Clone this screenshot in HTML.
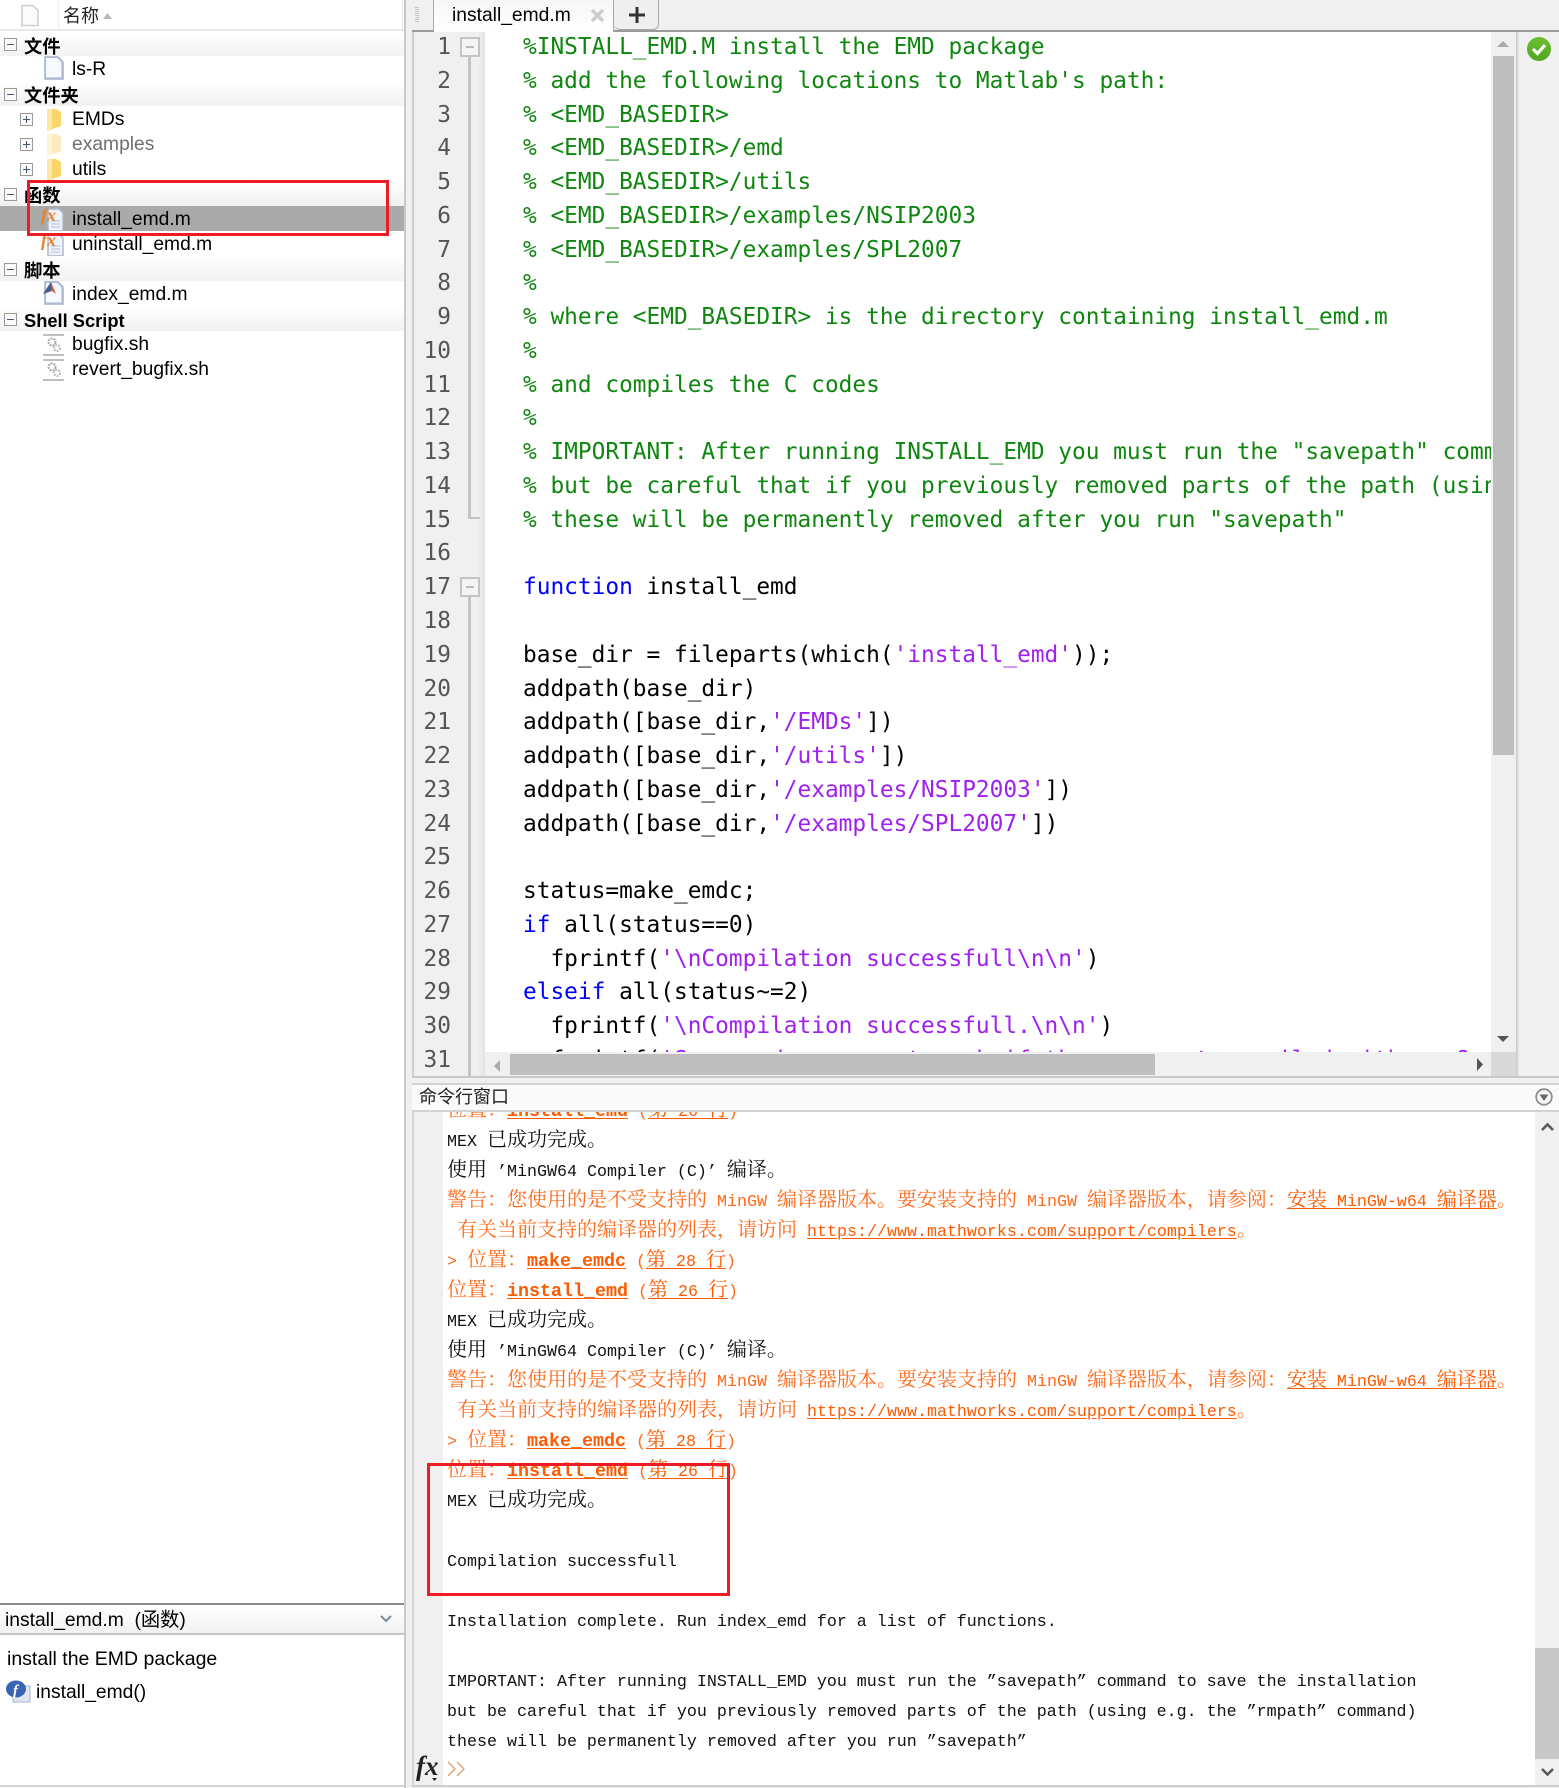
<!DOCTYPE html>
<html lang="zh"><head><meta charset="utf-8"><title>install_emd.m</title>
<style>
html,body{margin:0;padding:0}
body{width:1559px;height:1788px;position:relative;overflow:hidden;background:#f0f0f0;font-family:"Liberation Sans","Noto Sans CJK SC",sans-serif;color:#000}
div,svg{position:absolute;box-sizing:border-box}
.row{left:0;width:404px;height:25px;line-height:25px;font-size:19.25px;white-space:pre;background:#fff}
.row .t{left:72px;top:1px;position:absolute}
.sec{background:linear-gradient(#fff,#f1f1f1);font-weight:bold;font-size:18.3px}
.sec .t{left:24px;top:2px}
.sel{background:#aaa}
.box{left:4px;width:13px;height:13px;top:5px;border:1px solid #9a9a9a;background:#fafafa}
.box:after{content:"";position:absolute;left:2px;right:2px;top:5px;height:1px;background:#44567a}
.pl{left:20px;width:13px;height:13px;top:7px;border:1px solid #9a9a9a;background:#fafafa}
.pl:after{content:"";position:absolute;left:2px;right:2px;top:5px;height:1px;background:#44567a}
.pl:before{content:"";position:absolute;top:2px;bottom:2px;left:5px;width:1px;background:#44567a}
#code div,#nums div{position:static;height:33.77px;line-height:33.77px;white-space:pre}
#code,#nums{font-family:"DejaVu Sans Mono",monospace;font-size:22.8px}
#nums{left:412px;top:31px;width:39px;text-align:right;color:#555}
.g{color:#0f860f}.k{color:#0000ff}.s{color:#a020f0}
#cmd{left:447px;top:0;font-family:"Liberation Mono",monospace;font-size:16.67px;color:#111}
#cmd div{position:static;height:30px;line-height:30px;white-space:pre}
#cmd i{font-style:normal;font-family:"Noto Serif CJK SC","Noto Sans CJK SC",serif;font-size:20px;line-height:20px;font-weight:400}
.w{color:#ff6a1a}
.w u,.w b{color:#ff5a00;text-decoration:underline;text-underline-offset:2px}
.w b{font-size:18.33px;line-height:20px}
.red{border:3px solid #ed1c24;background:transparent;z-index:20}
</style></head>
<body>

<svg width="0" height="0" style="left:0;top:0">
<defs>
<symbol id="folder" viewBox="0 0 16 24"><path d="M1 2h9l5 3v14L1 24z" fill="#fbd46a"/><path d="M1 2h5v21l-5 1z" fill="#fde6a6"/></symbol>
<symbol id="doc" viewBox="0 0 22 24"><path d="M2 1h13l5 5v17H2z" fill="#c9d4e8" stroke="#a4b1ca" stroke-width="1.5"/><path d="M3 2h11l4 4v15H3z" fill="#f6f9fe"/></symbol>
<symbol id="fx" viewBox="0 0 24 26"><path d="M7 3h11l4 4v18H7z" fill="#eef2fa" stroke="#a9b6cd" stroke-width="1.400"/><path d="M10 15h9M10 18h9M10 21h9" stroke="#b3c0d6" stroke-width="1"/><text x="0" y="15" font-family="Liberation Serif,serif" font-style="italic" font-weight="bold" font-size="18" fill="#e8812a">fx</text></symbol>
<symbol id="sh" viewBox="0 0 22 24"><path d="M0 2h21" stroke="#aaa" stroke-width="1.500"/><path d="M0 22h21" stroke="#aaa" stroke-width="1.500"/><circle cx="9" cy="9" r="3.500" fill="none" stroke="#aaa" stroke-width="2" stroke-dasharray="2 1"/><circle cx="14" cy="15" r="3" fill="none" stroke="#bbb" stroke-width="2" stroke-dasharray="2 1"/></symbol>
</defs></svg>

<!-- LEFT PANEL -->
<div style="left:0;top:0;width:404px;height:1788px;background:#fff"></div>
<div style="left:0;top:0;width:404px;height:31px;background:#fff;border-bottom:2px solid #e8e8e8"></div>
<div style="left:58px;top:0;width:1px;height:30px;background:#eee"></div>
<div style="left:402px;top:0;width:1px;height:30px;background:#e6e6e6"></div>
<svg style="left:20px;top:4px" width="20" height="23"><path d="M2 1.500h11l5 5v15H2z" fill="#fbfbfb" stroke="#cfcfcf" stroke-width="1.600"/></svg>
<div style="left:63px;top:3px;font-size:18px;line-height:26px;color:#222">名称</div>
<svg style="left:103px;top:13px" width="10" height="6"><path d="M0 6L4.500 0 9 6z" fill="#b5bcae"/></svg>

<div class="row sec" style="top:33px"><div class="box"></div><span class="t" style="top:1px">文件</span></div>
<div class="row" style="top:56px"><span class="t">ls-R</span><svg style="left:43px;top:0" width="22" height="24"><use href="#doc"/></svg></div>
<div class="row sec" style="top:81px"><div class="box" style="top:7px"></div><span class="t">文件夹</span></div>
<div class="row" style="top:106px"><div class="pl"></div><svg style="left:46px;top:1px" width="16" height="24"><use href="#folder"/></svg><span class="t">EMDs</span></div>
<div class="row" style="top:131px"><div class="pl"></div><svg style="left:46px;top:1px;opacity:.45" width="16" height="24"><use href="#folder"/></svg><span class="t" style="color:#6f6f6f">examples</span></div>
<div class="row" style="top:156px"><div class="pl"></div><svg style="left:46px;top:1px" width="16" height="24"><use href="#folder"/></svg><span class="t">utils</span></div>
<div class="row sec" style="top:181px"><div class="box" style="top:7px"></div><span class="t">函数</span></div>
<div class="row sel" style="top:206px"><svg style="left:41px;top:0" width="24" height="26"><use href="#fx"/></svg><span class="t">install_emd.m</span></div>
<div class="row" style="top:231px"><svg style="left:41px;top:0" width="24" height="26"><use href="#fx"/></svg><span class="t">uninstall_emd.m</span></div>
<div class="row sec" style="top:256px"><div class="box" style="top:7px"></div><span class="t">脚本</span></div>
<div class="row" style="top:281px"><svg style="left:43px;top:0" width="22" height="24"><use href="#doc"/></svg><svg style="left:43px;top:0" width="16" height="16"><path d="M0 13L8 1l5 12-4-3z" fill="#d9542b"/><path d="M0 13l8-3V1z" fill="#3d5f99"/></svg><span class="t">index_emd.m</span></div>
<div class="row sec" style="top:306px"><div class="box" style="top:7px"></div><span class="t">Shell Script</span></div>
<div class="row" style="top:331px"><svg style="left:43px;top:2px" width="22" height="24"><use href="#sh"/></svg><span class="t">bugfix.sh</span></div>
<div class="row" style="top:356px"><svg style="left:43px;top:2px" width="22" height="24"><use href="#sh"/></svg><span class="t">revert_bugfix.sh</span></div>

<div class="red" style="left:27px;top:180px;width:362px;height:56px"></div>

<!-- details pane -->
<div style="left:0;top:1603px;width:404px;height:2px;background:#8a8a8a"></div>
<div style="left:0;top:1605px;width:404px;height:30px;background:linear-gradient(#fff,#f2f2f2);border-bottom:2px solid #c6c6c6"></div>
<div style="left:5px;top:1607px;font-size:19.25px;line-height:28px;white-space:pre">install_emd.m  (函数)</div>
<svg style="left:380px;top:1615px" width="13" height="9"><path d="M1 1l5 5 5-5" fill="none" stroke="#7d8a94" stroke-width="2"/></svg>
<div style="left:7px;top:1645px;font-size:19.5px;line-height:28px;white-space:pre">install the EMD package</div>
<svg style="left:6px;top:1680px" width="25" height="23"><rect x="7" y="6" width="17" height="16" fill="#dfe5f2" stroke="#aab4c8"/><ellipse cx="10" cy="9" rx="10" ry="8.500" fill="#3b63b4"/><text x="7" y="15" font-family="Liberation Serif,serif" font-style="italic" font-weight="bold" font-size="15" fill="#fff">f</text></svg>
<div style="left:36px;top:1679px;font-size:19.25px;line-height:28px;white-space:pre">install_emd()</div>
<div style="left:0;top:1785px;width:404px;height:2px;background:#d4d4d4"></div>

<!-- panel separator -->
<div style="left:404px;top:0;width:2px;height:1788px;background:#c9c9c9"></div>
<div style="left:406px;top:0;width:6px;height:1788px;background:#f0f0f0"></div>

<!-- EDITOR -->
<div style="left:412px;top:0;width:1147px;height:30px;background:#f0f0f0"></div>
<div style="left:412px;top:30px;width:1147px;height:2px;background:#9b9b9b"></div>
<svg style="left:415px;top:7px" width="4" height="15"><path d="M0 .5h4M0 2.500h4M0 4.500h4M0 6.500h4M0 8.500h4M0 10.500h4M0 12.500h4M0 14.500h4" stroke="#c4c4c4"/></svg>
<div style="left:433px;top:0;width:181px;height:32px;background:linear-gradient(#f6f6f8,#fff);border:1px solid #a8a8a8;border-top:0;border-bottom:0"></div>
<div style="left:452px;top:1px;font-size:19.25px;line-height:29px;white-space:pre">install_emd.m</div>
<svg style="left:590px;top:8px" width="15" height="15"><path d="M2 2l11 11M13 2L2 13" stroke="#cdcdcd" stroke-width="3.500"/></svg>
<div style="left:614px;top:0;width:45px;height:30px;background:#efefef;border:1px solid #a8a8a8;border-top:0;border-left:0;border-radius:0 0 6px 6px"></div>
<svg style="left:629px;top:7px" width="16" height="16"><path d="M8 0v16M0 8h16" stroke="#333" stroke-width="3"/></svg>

<div style="left:412px;top:32px;width:1104px;height:1044px;background:#fff;overflow:hidden">
 <div style="left:0;top:0;width:73px;height:1044px;background:linear-gradient(90deg,#f0f0f0 0,#f0f0f0 90%,#e4e4e4 100%)"></div>
</div>
<div style="left:412px;top:32px;width:2px;height:1044px;background:#cfcfcf"></div>

<div style="left:0;top:0;width:1559px;height:1076px;overflow:hidden;clip-path:inset(32px 0 0 0)">
<div id="nums"><div>1</div><div>2</div><div>3</div><div>4</div><div>5</div><div>6</div><div>7</div><div>8</div><div>9</div><div>10</div><div>11</div><div>12</div><div>13</div><div>14</div><div>15</div><div>16</div><div>17</div><div>18</div><div>19</div><div>20</div><div>21</div><div>22</div><div>23</div><div>24</div><div>25</div><div>26</div><div>27</div><div>28</div><div>29</div><div>30</div><div>31</div></div>
</div>

<!-- fold -->
<div style="left:468px;top:57px;width:3px;height:461px;background:#c4c4c4"></div>
<div style="left:468px;top:517px;width:12px;height:2px;background:#c4c4c4"></div>
<div style="left:468px;top:597px;width:3px;height:479px;background:#c4c4c4"></div>
<div style="left:460px;top:37px;width:20px;height:20px;background:#f4f4f4;border:2px solid #c4c4c4"></div>
<div style="left:466px;top:46px;width:8px;height:2px;background:#bcbcbc"></div>
<div style="left:460px;top:577px;width:20px;height:20px;background:#f4f4f4;border:2px solid #c4c4c4"></div>
<div style="left:466px;top:586px;width:8px;height:2px;background:#bcbcbc"></div>

<div style="left:485px;top:32px;width:1006px;height:1021px;overflow:hidden;background:#fff">
<div id="code" style="left:38px;top:-1px">
<div class="g">%INSTALL_EMD.M install the EMD package</div>
<div class="g">% add the following locations to Matlab's path:</div>
<div class="g">% &lt;EMD_BASEDIR&gt;</div>
<div class="g">% &lt;EMD_BASEDIR&gt;/emd</div>
<div class="g">% &lt;EMD_BASEDIR&gt;/utils</div>
<div class="g">% &lt;EMD_BASEDIR&gt;/examples/NSIP2003</div>
<div class="g">% &lt;EMD_BASEDIR&gt;/examples/SPL2007</div>
<div class="g">%</div>
<div class="g">% where &lt;EMD_BASEDIR&gt; is the directory containing install_emd.m</div>
<div class="g">%</div>
<div class="g">% and compiles the C codes</div>
<div class="g">%</div>
<div class="g">% IMPORTANT: After running INSTALL_EMD you must run the "savepath" command to save the installation</div>
<div class="g">% but be careful that if you previously removed parts of the path (using e.g. the "rmpath" command)</div>
<div class="g">% these will be permanently removed after you run "savepath"</div>
<div>&nbsp;</div>
<div><span class="k">function</span> install_emd</div>
<div>&nbsp;</div>
<div>base_dir = fileparts(which(<span class="s">'install_emd'</span>));</div>
<div>addpath(base_dir)</div>
<div>addpath([base_dir,<span class="s">'/EMDs'</span>])</div>
<div>addpath([base_dir,<span class="s">'/utils'</span>])</div>
<div>addpath([base_dir,<span class="s">'/examples/NSIP2003'</span>])</div>
<div>addpath([base_dir,<span class="s">'/examples/SPL2007'</span>])</div>
<div>&nbsp;</div>
<div>status=make_emdc;</div>
<div><span class="k">if</span> all(status==0)</div>
<div>  fprintf(<span class="s">'\nCompilation successfull\n\n'</span>)</div>
<div><span class="k">elseif</span> all(status~=2)</div>
<div>  fprintf(<span class="s">'\nCompilation successfull.\n\n'</span>)</div>
<div>  fprintf(<span class="s">'Some codes may not work if they are not compiled with gcc?</span></div>
</div>
</div>

<!-- editor v scrollbar -->
<div style="left:1491px;top:32px;width:25px;height:1021px;background:#f0f0f0"></div>
<div style="left:1493px;top:56px;width:21px;height:699px;background:#bebebe"></div>
<svg style="left:1497px;top:40px" width="13" height="8"><path d="M0 7L6 1l6 6z" fill="#aaa"/></svg>
<svg style="left:1497px;top:1035px" width="13" height="8"><path d="M0 1l6 6 6-6z" fill="#555"/></svg>
<div style="left:1516px;top:32px;width:3px;height:1044px;background:linear-gradient(90deg,#c6c6c6,#eaeaea)"></div>
<svg style="left:1527px;top:37px" width="24" height="24"><defs><linearGradient id="gc" x1="0" y1="0" x2="0" y2="1"><stop offset="0" stop-color="#6cc030"/><stop offset="1" stop-color="#4fa821"/></linearGradient></defs><circle cx="12" cy="12" r="12" fill="url(#gc)"/><path d="M6 12l4.500 4.500L18 8" fill="none" stroke="#fff" stroke-width="3.200"/></svg>

<!-- editor h scrollbar -->
<div style="left:485px;top:1052px;width:1006px;height:24px;background:#f0f0f0"></div>
<div style="left:510px;top:1054px;width:645px;height:21px;background:#bebebe"></div>
<svg style="left:493px;top:1060px" width="8" height="12"><path d="M7 0L1 6l6 6z" fill="#aaa"/></svg>
<svg style="left:1476px;top:1058px" width="8" height="13"><path d="M1 0l6 6.500-6 6.500z" fill="#555"/></svg>
<div style="left:1491px;top:1052px;width:25px;height:24px;background:#d9d9d9"></div>
<div style="left:412px;top:1076px;width:1147px;height:2px;background:#c9c9c9"></div>

<!-- COMMAND WINDOW -->
<div style="left:412px;top:1083px;width:1147px;height:2px;background:#d2d2d2"></div>
<div style="left:412px;top:1085px;width:1147px;height:25px;background:#fafafa"></div>
<div style="left:412px;top:1110px;width:1147px;height:2px;background:#d2d2d2"></div>
<div style="left:419px;top:1084px;font-size:18px;line-height:27px;color:#222">命令行窗口</div>
<svg style="left:1535px;top:1088px" width="18" height="18"><circle cx="9" cy="9" r="7.800" fill="#f8f8f8" stroke="#8e8e8e" stroke-width="1.800"/><path d="M4.500 6.500h9L9 13z" fill="#666"/></svg>

<div style="left:412px;top:1112px;width:31px;height:673px;background:#f0f0f0"></div>
<div style="left:412px;top:1112px;width:2px;height:673px;background:#d6d6d6"></div>
<div style="left:443px;top:1112px;width:1092px;height:673px;background:#fff"></div>
<div style="left:1535px;top:1112px;width:24px;height:673px;background:#f0f0f0"></div>
<div style="left:1535px;top:1648px;width:24px;height:111px;background:#c8c8c8"></div>
<svg style="left:1541px;top:1122px" width="13" height="10"><path d="M1 8l5.500-5.500L12 8" fill="none" stroke="#5a5a5a" stroke-width="2.600"/></svg>
<svg style="left:1541px;top:1767px" width="13" height="10"><path d="M1 2l5.500 5.500L12 2" fill="none" stroke="#5a5a5a" stroke-width="2.600"/></svg>

<div style="left:443px;top:1112px;width:1092px;height:673px;overflow:hidden">
<div id="cmd" style="left:4px;top:-14.5px">
<div class="w"><i>位置：</i><b>install_emd</b> (<u><i>第</i> 26 <i>行</i></u>)</div>
<div>MEX <i>已成功完成。</i></div>
<div><i>使用</i> ’MinGW64 Compiler (C)’ <i>编译。</i></div>
<div class="w"><i>警告：您使用的是不受支持的</i> MinGW <i>编译器版本。要安装支持的</i> MinGW <i>编译器版本，请参阅：</i><u><i>安装</i> MinGW-w64 <i>编译器</i></u><i>。</i></div>
<div class="w"> <i>有关当前支持的编译器的列表，请访问</i> <u>https://www.mathworks.com/support/compilers</u><i>。</i></div>
<div class="w">&gt; <i>位置：</i><b>make_emdc</b> (<u><i>第</i> 28 <i>行</i></u>)</div>
<div class="w"><i>位置：</i><b>install_emd</b> (<u><i>第</i> 26 <i>行</i></u>)</div>
<div>MEX <i>已成功完成。</i></div>
<div><i>使用</i> ’MinGW64 Compiler (C)’ <i>编译。</i></div>
<div class="w"><i>警告：您使用的是不受支持的</i> MinGW <i>编译器版本。要安装支持的</i> MinGW <i>编译器版本，请参阅：</i><u><i>安装</i> MinGW-w64 <i>编译器</i></u><i>。</i></div>
<div class="w"> <i>有关当前支持的编译器的列表，请访问</i> <u>https://www.mathworks.com/support/compilers</u><i>。</i></div>
<div class="w">&gt; <i>位置：</i><b>make_emdc</b> (<u><i>第</i> 28 <i>行</i></u>)</div>
<div class="w"><i>位置：</i><b>install_emd</b> (<u><i>第</i> 26 <i>行</i></u>)</div>
<div>MEX <i>已成功完成。</i></div>
<div>&nbsp;</div>
<div>Compilation successfull</div>
<div>&nbsp;</div>
<div>Installation complete. Run index_emd for a list of functions.</div>
<div>&nbsp;</div>
<div>IMPORTANT: After running INSTALL_EMD you must run the ”savepath” command to save the installation</div>
<div>but be careful that if you previously removed parts of the path (using e.g. the ”rmpath” command)</div>
<div>these will be permanently removed after you run ”savepath”</div>
</div>
</div>

<div style="left:416px;top:1750px;font-family:'Liberation Serif',serif;font-style:italic;font-weight:bold;font-size:27px;line-height:32px;color:#222">fx</div>
<svg style="left:432px;top:1778px" width="6" height="4"><path d="M0 0h5L2.500 3z" fill="#222"/></svg>
<svg style="left:447px;top:1761px" width="20" height="16"><path d="M1 1l7 7-7 7M10 1l7 7-7 7" fill="none" stroke="#d9a066" stroke-width="1.300"/></svg>
<div style="left:412px;top:1785px;width:1147px;height:2px;background:#cfcfcf"></div>

<div class="red" style="left:427px;top:1463px;width:303px;height:133px"></div>
</body></html>
